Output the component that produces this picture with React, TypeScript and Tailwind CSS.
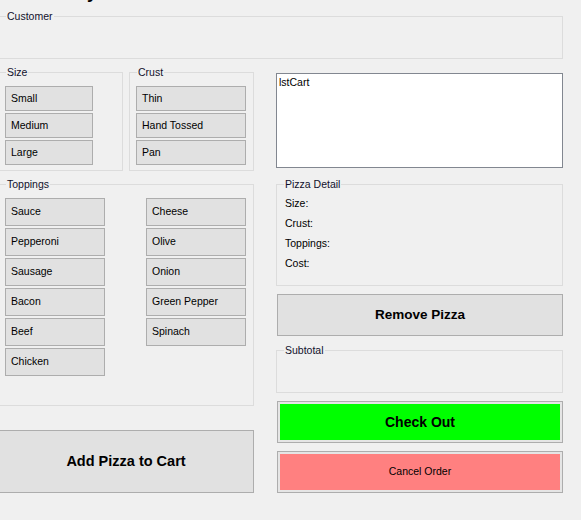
import React from 'react';

interface GroupBoxProps {
  title: string;
  className?: string;
  children?: React.ReactNode;
}

// WinForms-style group box: fieldset with the caption sitting on the top border
const GroupBox: React.FC<GroupBoxProps> = ({ title, className = '', children }) => (
  <fieldset className={`border border-[#dcdcdc] min-w-0 ${className}`}>
    <legend className="ml-[7px] px-[1px] text-[10.5px] leading-[13px] text-[#10102c]">{title}</legend>
    {children}
  </fieldset>
);

const OptionButton: React.FC<{ label: string; className?: string }> = ({ label, className = '' }) => (
  <button className={`flex items-center pl-[5px] bg-[#e1e1e1] border border-[#adadad] text-[10.5px] text-black ${className}`}>
    {label}
  </button>
);

const sizes = ['Small', 'Medium', 'Large'];
const crusts = ['Thin', 'Hand Tossed', 'Pan'];
const toppingsLeft = ['Sauce', 'Pepperoni', 'Sausage', 'Bacon', 'Beef', 'Chicken'];
const toppingsRight = ['Cheese', 'Olive', 'Onion', 'Green Pepper', 'Spinach'];
const details = ['Size:', 'Crust:', 'Toppings:', 'Cost:'];

export default function App() {
  return (
    <div className="w-[581px] h-[520px] bg-[#f0f0f0] overflow-hidden font-['Liberation_Sans',Arial,sans-serif]">
      {/* title scrolled off the top of the form */}
      <div className="h-[3px] overflow-hidden pl-[2px]">
        <h1 className="-mt-[17px] text-[18px] leading-[18px] font-bold text-black whitespace-nowrap">Pizza Party</h1>
      </div>

      <div className="-ml-[2px]">
        <GroupBox title="Customer" className="mt-[7px] w-[565px] h-[49px]" />

        <div className="flex mt-[7px]">
          {/* left column */}
          <div className="w-[256px] flex flex-col">
            <div className="flex gap-[6px]">
              <GroupBox title="Size" className="w-[125px] h-[105px]">
                <div className="pl-[6px] pt-[7px] flex flex-col gap-[2px]">
                  {sizes.map((s) => (
                    <OptionButton key={s} label={s} className="w-[88px] h-[25px]" />
                  ))}
                </div>
              </GroupBox>
              <GroupBox title="Crust" className="w-[125px] h-[105px]">
                <div className="pl-[6px] pt-[7px] flex flex-col gap-[2px]">
                  {crusts.map((c) => (
                    <OptionButton key={c} label={c} className="w-[110px] h-[25px]" />
                  ))}
                </div>
              </GroupBox>
            </div>

            <GroupBox title="Toppings" className="mt-[7px] w-[256px] h-[228px]">
              <div className="pl-[6px] pt-[7px] flex gap-[41px]">
                <div className="flex flex-col gap-[2px]">
                  {toppingsLeft.map((t) => (
                    <OptionButton key={t} label={t} className="w-[100px] h-[28px]" />
                  ))}
                </div>
                <div className="flex flex-col gap-[2px]">
                  {toppingsRight.map((t) => (
                    <OptionButton key={t} label={t} className="w-[100px] h-[28px]" />
                  ))}
                </div>
              </div>
            </GroupBox>

            <button className="mt-[24px] w-[256px] h-[63px] bg-[#e1e1e1] border border-[#adadad] text-[14.5px] font-bold text-black">
              Add Pizza to Cart
            </button>
          </div>

          {/* right column */}
          <div className="ml-[22px] w-[287px] flex flex-col pt-[7px]">
            <div className="h-[95px] bg-white border border-[#828790] px-[2px] pt-[2px] text-[10.5px] leading-[13px] text-black">
              lstCart
            </div>

            <GroupBox title="Pizza Detail" className="mt-[10px] w-[287px] h-[108px]">
              <div className="pl-[8px] pt-[3px] flex flex-col">
                {details.map((d) => (
                  <div key={d} className="h-[20px] flex items-center text-[10.5px] text-black">{d}</div>
                ))}
              </div>
            </GroupBox>

            <button className="mt-[8px] ml-[1px] w-[286px] h-[42px] bg-[#e1e1e1] border border-[#adadad] text-[13.5px] font-bold text-black">
              Remove Pizza
            </button>

            <GroupBox title="Subtotal" className="mt-[8px] w-[287px] h-[49px]" />

            <button className="mt-[8px] ml-[1px] w-[286px] h-[42px] bg-[#e5e5e5] border border-[#adadad] p-[2px]">
              <span className="flex items-center justify-center w-full h-full bg-[#00ff00] text-[14px] font-bold text-black">
                Check Out
              </span>
            </button>

            <button className="mt-[8px] ml-[1px] w-[286px] h-[42px] bg-[#e5e5e5] border border-[#adadad] p-[2px]">
              <span className="flex items-center justify-center w-full h-full bg-[#ff8080] text-[10.5px] text-black">
                Cancel Order
              </span>
            </button>
          </div>
        </div>
      </div>
    </div>
  );
}
